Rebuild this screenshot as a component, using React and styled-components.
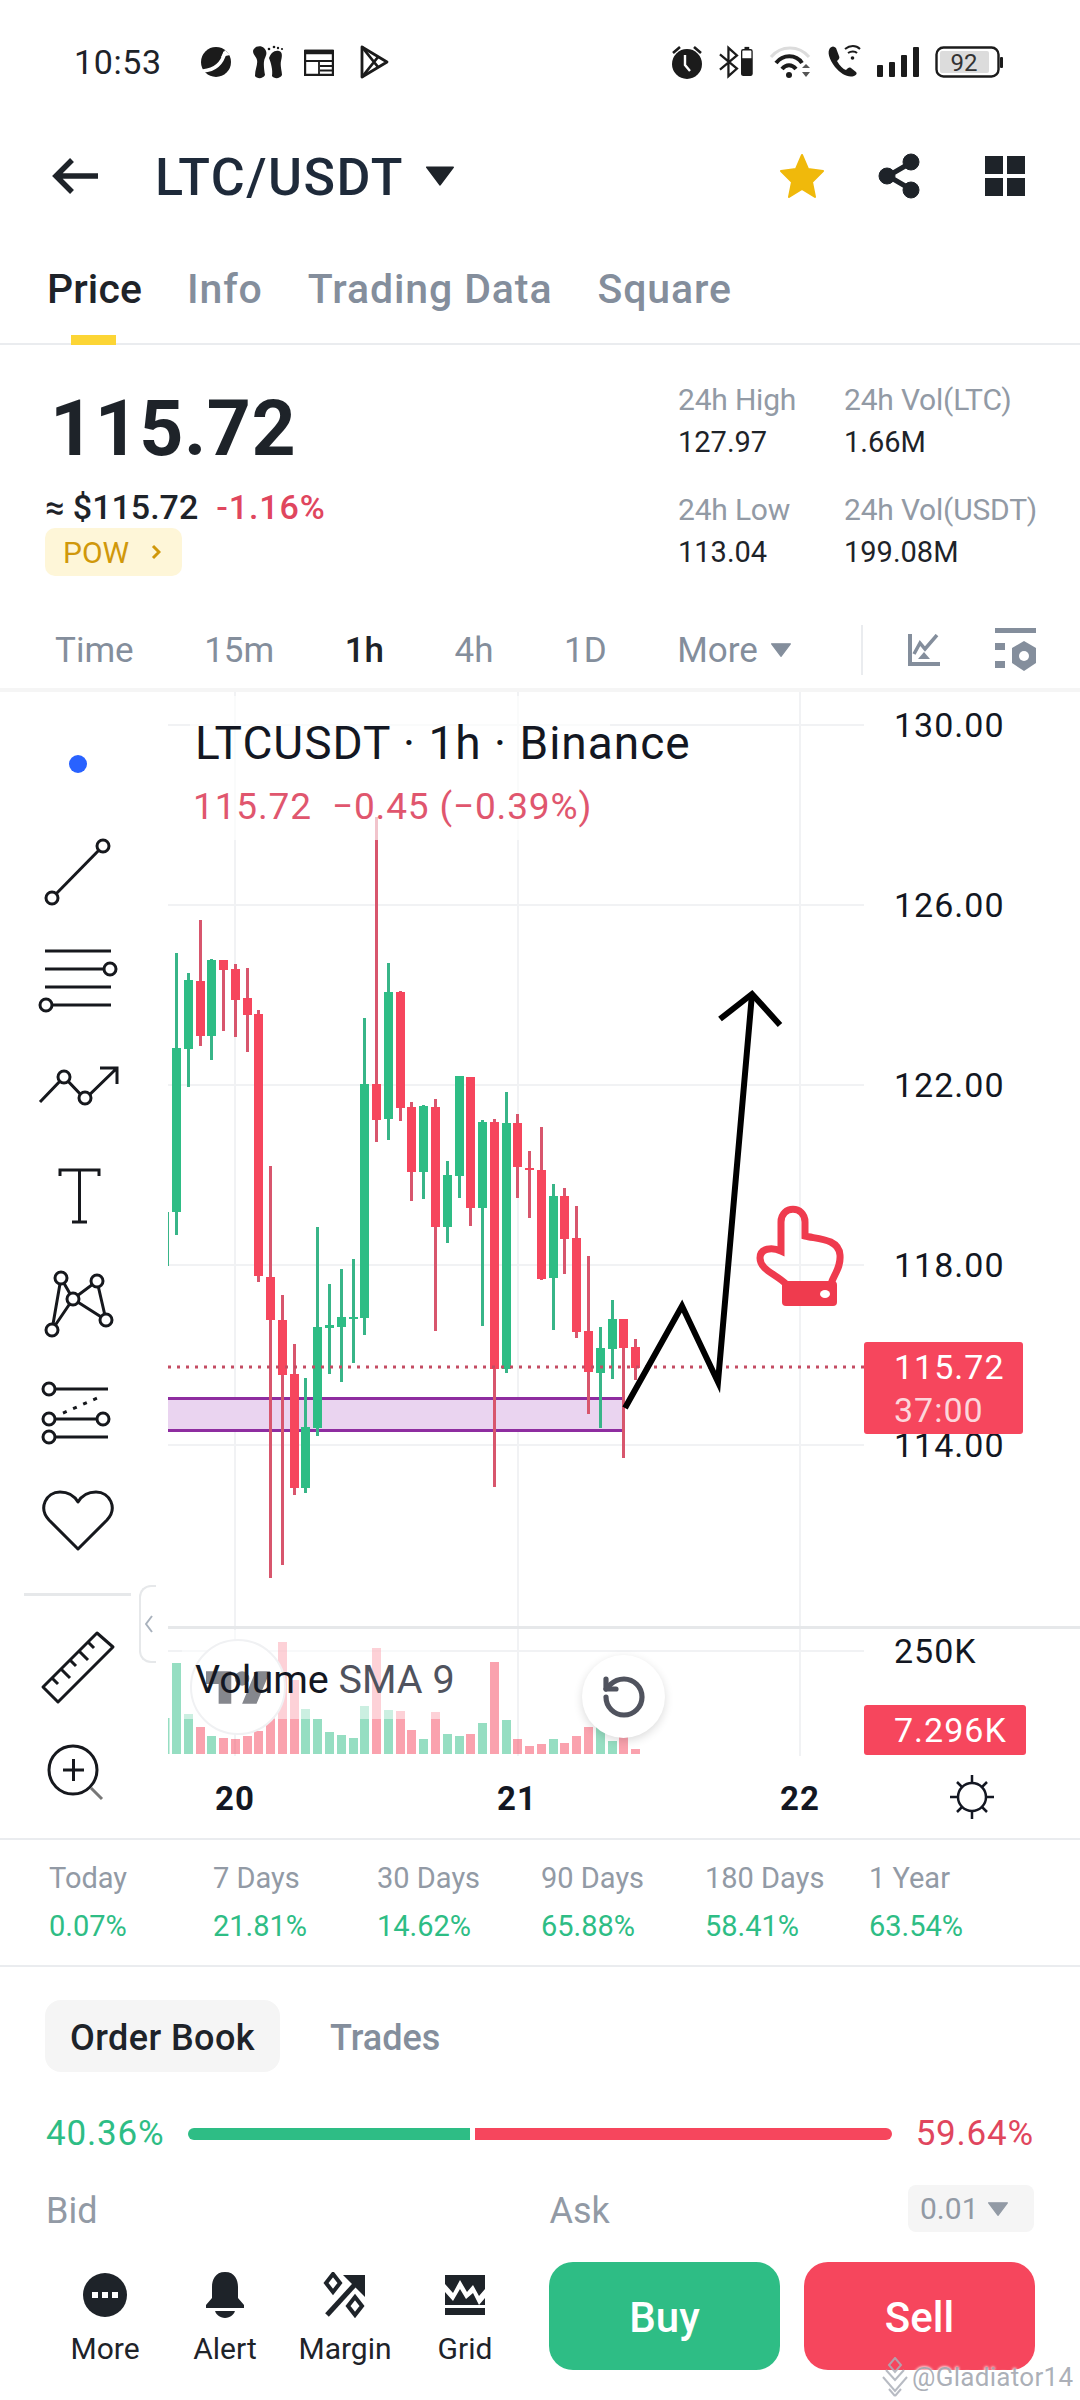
import React from 'react';
import styled, { createGlobalStyle } from 'styled-components';
import { RotateCcw } from 'lucide-react';

const GlobalStyle = createGlobalStyle`
  html, body {
    margin: 0;
    padding: 0;
    background: #fff;
    font-family: Roboto, "Open Sans", sans-serif;
    color: #1e2329;
  }
  * { box-sizing: border-box; }
`;

const DARK = '#1e2329';
const GRAY = '#848e9c';
const GREEN = '#2ebd85';
const RED = '#f6465d';

const Page = styled.div`
  position: relative;
  width: 1080px;
  height: 2400px;
  overflow: hidden;
  background: #fff;
`;

const StatusBar = styled.div`
  height: 124px;
  display: flex;
  align-items: center;
  justify-content: space-between;
  padding: 0 77px 0 74px;
`;

const StatusGroup = styled.div`
  display: flex;
  align-items: center;
  gap: ${p => p.$gap || 0}px;
`;

const Clock = styled.span`
  font-size: 34px;
  letter-spacing: 0.6px;
  margin-right: 18px;
`;

const Header = styled.div`
  height: 104px;
  display: flex;
  align-items: center;
  padding: 0 55px 0 52px;
`;

const PairName = styled.div`
  font-size: 52px;
  font-weight: 500;
  margin: 2px 0 0 57px;
  letter-spacing: 1.5px;
  color: #1e2a3a;
`;

const PairCaret = styled.span`
  margin-left: 22px;
  display: flex;
`;

const HeaderActions = styled.div`
  margin-left: auto;
  display: flex;
  align-items: center;
  gap: 53px;
`;

const Tabs = styled.div`
  height: 117px;
  display: flex;
  align-items: center;
  gap: 45px;
  padding: 6px 0 0 47px;
  border-bottom: 2px solid #eaecef;
`;

const Tab = styled.div`
  position: relative;
  font-size: 41px;
  font-weight: 500;
  letter-spacing: ${p => (p.$active ? 0.1 : 0.9)}px;
  color: ${p => (p.$active ? DARK : GRAY)};
  &::after {
    content: '';
    display: ${p => (p.$active ? 'block' : 'none')};
    position: absolute;
    left: 24px;
    bottom: -32px;
    width: 45px;
    height: 10px;
    background: #fcd535;
  }
`;

const Ticker = styled.div`
  height: 267px;
  display: flex;
  justify-content: space-between;
`;

const TickerLeft = styled.div`
  padding: 44px 0 0 45px;
`;

const BigPrice = styled.div`
  font-size: 77px;
  font-weight: 700;
  line-height: 80px;
  letter-spacing: 0.5px;
  margin-left: 5px;
`;

const PriceSub = styled.div`
  margin-top: 17px;
  height: 42px;
  display: flex;
  align-items: center;
  gap: 18px;
  font-size: 34px;
  font-weight: 500;
`;

const Change = styled.span`
  color: #e0465e;
  letter-spacing: 0.9px;
`;

const Pill = styled.div`
  width: 137px;
  height: 48px;
  display: flex;
  align-items: center;
  gap: 22px;
  padding-left: 18px;
  border-radius: 10px;
  background: #fef6d8;
  color: #d0980b;
  font-size: 30px;
`;

const StatGrid = styled.div`
  width: 402px;
  padding-top: 35px;
  display: grid;
  grid-template-columns: 166px 1fr;
  grid-auto-rows: 83px;
  row-gap: 27px;
`;

const StatCell = styled.div`
  display: flex;
  flex-direction: column;
  gap: 2px;
`;

const StatLabel = styled.div`
  font-size: 30px;
  line-height: 40px;
  letter-spacing: -0.2px;
  color: #929aa5;
`;

const StatValue = styled.div`
  font-size: 29px;
  line-height: 40px;
  color: ${DARK};
`;

const Intervals = styled.div`
  height: 80px;
  padding: 0 44px 0 55px;
  display: flex;
  align-items: center;
  border-bottom: 4px solid #f5f5f5;
`;

const IntervalList = styled.div`
  display: flex;
  align-items: center;
  gap: 70.5px;
`;

const Interval = styled.div`
  display: flex;
  align-items: center;
  gap: 13px;
  font-size: 35px;
  font-weight: ${p => (p.$active ? 500 : 400)};
  color: ${p => (p.$active ? DARK : GRAY)};
`;

const IntervalTools = styled.div`
  margin-left: auto;
  height: 50px;
  display: flex;
  align-items: center;
  gap: 55px;
  padding-left: 45px;
  border-left: 2px solid #eaecef;
`;

const ChartRow = styled.div`
  position: relative;
  display: flex;
  height: 1146px;
`;

const Toolbar = styled.div`
  width: 168px;
  padding-top: 17px;
  display: flex;
  flex-direction: column;
`;

const ToolIcon = styled.svg`
  display: block;
  flex: none;
  width: 168px;
  height: ${p => p.$h || 108}px;
  fill: none;
  stroke: #16181d;
  stroke-width: 3;
`;

const ToolDivider = styled.div`
  width: 107px;
  height: 3px;
  margin: 20px 0 30px 24px;
  background: #e6e8ea;
`;

const Collapse = styled.div`
  position: absolute;
  left: 139px;
  top: 893px;
  width: 17px;
  height: 78px;
  border: 2px solid #e6e8ea;
  border-right: none;
  border-radius: 12px 0 0 12px;
  display: flex;
  align-items: center;
  justify-content: center;
`;

const ChartSvg = styled.svg`
  display: block;
  width: 912px;
  height: 1146px;
`;

const AxisText = styled.text`
  font-family: Roboto, sans-serif;
  font-size: ${p => p.$size || 34}px;
  font-weight: ${p => p.$weight || 400};
  fill: ${p => p.$color || '#131722'};
  letter-spacing: 1px;
`;

const LegendTitle = styled.div`
  position: absolute;
  left: 195px;
  top: 24px;
  font-size: 46px;
  line-height: 54px;
  letter-spacing: 1px;
  color: #131722;
`;

const LegendValues = styled.div`
  position: absolute;
  left: 193px;
  top: 93px;
  font-size: 37px;
  line-height: 44px;
  letter-spacing: 0.85px;
  color: #e0566e;
  white-space: pre;
`;

const VolumeLegend = styled.div`
  position: absolute;
  left: 195px;
  top: 965px;
  font-size: 39.5px;
  line-height: 46px;
  color: #131722;
`;

const Muted = styled.span`
  color: #50535e;
`;

const LogoBadge = styled.div`
  position: absolute;
  left: 190px;
  top: 947px;
  width: 96px;
  height: 96px;
  border-radius: 50%;
  background: #fff;
  border: 2px solid #f0f1f3;
  display: flex;
  align-items: center;
  justify-content: center;
`;

const ResetButton = styled.div`
  position: absolute;
  left: 582px;
  top: 963px;
  width: 83px;
  height: 83px;
  border-radius: 50%;
  background: #fff;
  box-shadow: 0 3px 10px rgba(0, 0, 0, 0.14);
  display: flex;
  align-items: center;
  justify-content: center;
  color: #50535e;
`;

const Performance = styled.div`
  height: 129px;
  padding: 18px 0 0 49px;
  display: grid;
  grid-template-columns: repeat(6, 164px);
  border-top: 2px solid #eaecef;
  border-bottom: 2px solid #eaecef;
`;

const PerfCell = styled.div`
  display: flex;
  flex-direction: column;
  gap: 8px;
`;

const PerfLabel = styled.div`
  font-size: 29px;
  line-height: 40px;
  color: #929aa5;
`;

const PerfValue = styled.div`
  font-size: 29px;
  line-height: 40px;
  color: ${GREEN};
`;

const BookTabs = styled.div`
  margin-top: 33px;
  padding-left: 45px;
  display: flex;
  align-items: center;
  gap: 50px;
`;

const BookChip = styled.div`
  width: 235px;
  height: 72px;
  padding-top: 3px;
  border-radius: 16px;
  background: #f5f5f5;
  display: flex;
  align-items: center;
  justify-content: center;
  font-size: 36px;
  font-weight: 500;
  letter-spacing: 0.4px;
`;

const BookTab = styled.div`
  padding-top: 3px;
  font-size: 36px;
  font-weight: 500;
  color: ${GRAY};
`;

const RatioRow = styled.div`
  margin-top: 37px;
  height: 48px;
  padding: 1px 46px 0;
  display: flex;
  align-items: center;
  justify-content: space-between;
  font-size: 35px;
  letter-spacing: 0.8px;
`;

const RatioText = styled.span`
  color: ${p => (p.$sell ? '#e0465e' : GREEN)};
`;

const RatioBar = styled.div`
  width: 704px;
  height: 12px;
  display: flex;
  gap: 5px;
`;

const RatioPart = styled.div`
  height: 100%;
  background: ${p => (p.$sell ? RED : GREEN)};
  border-radius: ${p => (p.$sell ? '0 6px 6px 0' : '6px 0 0 6px')};
`;

const BidRow = styled.div`
  margin-top: 28px;
  height: 47px;
  padding: 0 46px;
  display: flex;
  align-items: center;
  font-size: 36px;
  color: #929aa5;
`;

const BidLabel = styled.span`
  padding-top: 5px;
`;

const AskLabel = styled(BidLabel)`
  margin-left: 452px;
`;

const StepChip = styled.div`
  margin-left: auto;
  width: 126px;
  height: 47px;
  padding-left: 12px;
  display: flex;
  align-items: center;
  gap: 9px;
  border-radius: 8px;
  background: #f5f5f5;
  font-size: 30px;
`;

const BottomBar = styled.div`
  margin-top: 30px;
  padding: 0 45px 0 45px;
  display: flex;
  align-items: flex-start;
`;

const NavItems = styled.div`
  width: 504px;
  display: grid;
  grid-template-columns: repeat(4, 120px);
`;

const NavItem = styled.div`
  display: flex;
  flex-direction: column;
  align-items: center;
  padding-top: 10px;
  font-size: 30px;
  line-height: 40px;
  color: ${DARK};
  gap: 11px;
`;

const TradeButton = styled.div`
  width: 231px;
  height: 108px;
  padding-top: 3px;
  margin-right: ${p => (p.$sell ? 0 : 24)}px;
  border-radius: 24px;
  background: ${p => (p.$sell ? RED : GREEN)};
  display: flex;
  align-items: center;
  justify-content: center;
  color: #fff;
  font-size: 42px;
  font-weight: 500;
`;

const Watermark = styled.div`
  position: absolute;
  left: 882px;
  top: 2357px;
  display: flex;
  align-items: center;
  gap: 4px;
  font-size: 26px;
  letter-spacing: 0.3px;
  color: rgba(150, 155, 165, 0.8);
  text-shadow: 0 0 3px #fff, 0 0 3px #fff;
`;

// x, wick top, wick bottom, body top, body bottom, colour
const CANDLES = [
  [176.5, 953, 1235, 1048, 1212, 'g'], [188.5, 973, 1087, 980, 1049, 'g'], [200.5, 920, 1046, 981, 1036, 'r'],
  [211.5, 959, 1060, 960, 1036, 'g'], [223.5, 960, 1031, 960, 970, 'r'], [235.5, 964, 1037, 969, 1000, 'r'],
  [247.5, 968, 1052, 998, 1015, 'r'], [258.5, 1010, 1282, 1014, 1276, 'r'], [270.5, 1166, 1578, 1277, 1320, 'r'],
  [282.5, 1295, 1565, 1320, 1375, 'r'], [294.5, 1344, 1495, 1374, 1488, 'r'], [305.5, 1378, 1493, 1427, 1488, 'g'],
  [317.5, 1227, 1436, 1327, 1428, 'g'], [329.5, 1284, 1374, 1325, 1328, 'g'], [341.5, 1269, 1382, 1317, 1327, 'g'],
  [353.5, 1259, 1363, 1317, 1318, 'g'], [364.5, 1018, 1335, 1084, 1318, 'g'], [376.5, 817, 1142, 1084, 1120, 'r'],
  [388.5, 963, 1140, 992, 1119, 'g'], [400.5, 991, 1121, 992, 1108, 'r'], [411.5, 1102, 1201, 1107, 1172, 'r'],
  [423.5, 1105, 1199, 1106, 1172, 'g'], [435.5, 1099, 1331, 1107, 1227, 'r'], [447.5, 1161, 1243, 1175, 1227, 'g'],
  [459.5, 1076, 1198, 1076, 1176, 'g'], [470.5, 1077, 1226, 1077, 1208, 'r'], [482.5, 1120, 1326, 1122, 1208, 'g'],
  [494.5, 1119, 1487, 1122, 1369, 'r'], [506.5, 1092, 1373, 1123, 1369, 'g'], [517.5, 1114, 1198, 1123, 1167, 'r'],
  [529.5, 1151, 1218, 1168, 1170, 'r'], [541.5, 1127, 1280, 1170, 1279, 'r'], [553.5, 1184, 1330, 1196, 1278, 'g'],
  [564.5, 1188, 1274, 1196, 1239, 'r'], [576.5, 1206, 1338, 1238, 1332, 'r'], [588.5, 1256, 1414, 1331, 1372, 'r'],
  [600.5, 1327, 1428, 1348, 1373, 'g'], [612.5, 1300, 1379, 1319, 1349, 'g'], [623.5, 1319, 1458, 1319, 1348, 'r'],
  [635.5, 1339, 1380, 1347, 1368, 'r'],
];

// top of each volume bar, same order as the candles
const VOLUMES = [
  1663, 1714, 1727, 1736, 1738, 1739, 1736, 1731, 1717, 1642, 1680, 1709, 1719, 1732, 1735, 1738, 1706, 1648, 1710,
  1711, 1730, 1739, 1712, 1734, 1736, 1734, 1723, 1662, 1720, 1739, 1746, 1744, 1739, 1743, 1736, 1727, 1725, 1741,
  1733, 1749,
];

const H_GRID = [725, 905, 1085, 1265, 1445, 1651];
const V_GRID = [235, 518, 800];
const PRICE_LABELS = [[725, '130.00'], [905, '126.00'], [1085, '122.00'], [1265, '118.00'], [1445, '114.00']];

const Candle = ({ x, wt, wb, bt, bb, up }) => (
  <g>
    <rect x={x - 1.5} y={wt} width={3} height={wb - wt} fill={up ? '#38b588' : '#d8566d'} />
    <rect x={x - 4.5} y={bt} width={9} height={Math.max(bb - bt, 2)} fill={up ? GREEN : RED} />
  </g>
);

const Chart = () => (
  <ChartSvg viewBox="168 692 912 1146">
    {V_GRID.map(x => <rect key={x} x={x - 1} y={692} width={2} height={1064} fill="#f1f2f4" />)}
    {H_GRID.map(y => <rect key={y} x={168} y={y - 1} width={696} height={2} fill="#f1f2f4" />)}
    <rect x={168} y={1626} width={912} height={3} fill="#e6e8ea" />

    <rect x={168} y={1399} width={454} height={31} fill="#ead4f0" />
    <rect x={168} y={1397} width={454} height={3} fill="#8e2da0" />
    <rect x={168} y={1429} width={454} height={3} fill="#8e2da0" />

    <rect x={167.5} y={1212} width={1.5} height={54} fill="#38b588" />
    {CANDLES.map(([x, wt, wb, bt, bb, c]) => (
      <Candle key={x} x={x} wt={wt} wb={wb} bt={bt} bb={bb} up={c === 'g'} />
    ))}
    <rect x={190} y={696} width={420} height={144} fill="#fff" fillOpacity="0.65" />

    <rect x={168} y={1718} width={1.5} height={36} fill="rgba(46,189,133,0.5)" />
    {VOLUMES.map((top, i) => (
      <rect
        key={i}
        x={CANDLES[i][0] - 4.5}
        y={top}
        width={9}
        height={1754 - top}
        fill={CANDLES[i][5] === 'g' ? 'rgba(46,189,133,0.5)' : 'rgba(246,70,93,0.5)'}
      />
    ))}
    <rect x={182} y={1630} width={258} height={89} fill="#fff" fillOpacity="0.5" />

    <line x1={168} y1={1367} x2={864} y2={1367} stroke="#c44b62" strokeWidth="3" strokeDasharray="3 6" />

    <polyline points="625,1408 682,1306 718,1382 752,994" fill="none" stroke="#000" strokeWidth="6" />
    <polyline points="720,1019 752,994 780,1025" fill="none" stroke="#000" strokeWidth="6" />

    <path
      d="M786 1284C776 1274 760 1270 760 1258C760 1248 772 1247 781 1251L781 1222C781 1205 805 1205 805 1222L805 1236C816 1239 839 1238 840 1255C841 1268 834 1274 831 1284"
      fill="none"
      stroke="#ef3b4e"
      strokeWidth="7"
    />
    <rect x={782} y={1281} width={55} height={25} rx={4} fill="#ef3b4e" />
    <ellipse cx={825} cy={1294} rx={5} ry={4} fill="#fff" />

    {PRICE_LABELS.map(([y, label]) => (
      <AxisText key={label} x={894} y={y + 12}>{label}</AxisText>
    ))}
    <AxisText x={894} y={1663}>250K</AxisText>

    <rect x={864} y={1342} width={159} height={92} rx={3} fill={RED} />
    <AxisText x={894} y={1379} $color="#fff">115.72</AxisText>
    <AxisText x={894} y={1422} $color="#fcd6db">37:00</AxisText>
    <rect x={864} y={1705} width={162} height={50} rx={3} fill={RED} />
    <AxisText x={894} y={1742} $color="#fff">7.296K</AxisText>

    <AxisText x={235} y={1810} $weight={700} $size={33} textAnchor="middle">20</AxisText>
    <AxisText x={517} y={1810} $weight={700} $size={33} textAnchor="middle">21</AxisText>
    <AxisText x={800} y={1810} $weight={700} $size={33} textAnchor="middle">22</AxisText>

    <g fill="none" stroke="#131722" strokeWidth="2.5">
      <circle cx={972} cy={1797} r={14} />
      <path d="M972 1775V1783M972 1811V1819M950 1797H958M986 1797H994M957 1782L962 1787M982 1807L987 1812M987 1782L982 1787M962 1807L957 1812" />
    </g>
  </ChartSvg>
);

const MoonIcon = () => (
  <svg width="32" height="34" viewBox="0 0 32 34">
    <circle cx="16" cy="17" r="15" fill="#1b1b1b" />
    <path d="M3 26C14 25 22 20 25 7" fill="none" stroke="#fff" strokeWidth="3.4" />
    <path d="M21 12L25 5L30 10" fill="#fff" />
  </svg>
);

const ButterflyIcon = () => (
  <svg width="32" height="34" viewBox="0 0 32 34" fill="#1b1b1b">
    <path d="M1 6C2 1 9 0 12 3C15 6 15 9 13 13C11 17 12 24 13 30C11 34 5 34 3 31C3 24 6 20 5 15C4 11 1 10 1 6Z" />
    <path d="M17 13C19 8 22 5 27 6C31 7 30 12 29 16C28 21 30 26 30 30C28 34 22 34 20 31C21 25 19 18 17 13Z" />
    <circle cx="17" cy="4" r="1.3" />
    <circle cx="22" cy="2" r="1.3" />
    <circle cx="26" cy="3" r="1.2" />
    <circle cx="30" cy="4" r="1.1" />
  </svg>
);

const NewsIcon = () => (
  <svg width="30" height="28" viewBox="0 0 30 28" fill="none" stroke="#1b1b1b">
    <path d="M1 3H29V27H1Z" strokeWidth="2.4" />
    <path d="M1 2H29V6H1Z" fill="#1b1b1b" strokeWidth="0.5" />
    <path d="M1 13H29M15 13V27M16 18H28M16 22.5H28" strokeWidth="1.8" />
  </svg>
);

const PlayIcon = () => (
  <svg width="35" height="34" viewBox="-5 0 35 34" fill="none" stroke="#1b1b1b" strokeWidth="2.8" strokeLinejoin="round">
    <path d="M3 2L28 17L3 32Z" />
    <path d="M3 2L19 22M3 32L19 12" />
  </svg>
);

const AlarmIcon = () => (
  <svg width="32" height="34" viewBox="0 0 32 34">
    <circle cx="16" cy="19" r="15" fill="#1b1b1b" />
    <path d="M2 8L9 2M30 8L23 2" stroke="#1b1b1b" strokeWidth="2.6" />
    <path d="M14 10V20L19 26" stroke="#fff" strokeWidth="2.4" fill="none" />
  </svg>
);

const BluetoothBatteryIcon = () => (
  <svg width="34" height="34" viewBox="0 0 36 34">
    <path d="M1 9L19 24L10 32V2L19 10L1 25" fill="none" stroke="#1b1b1b" strokeWidth="2.4" />
    <rect x="24" y="4" width="11" height="27" rx="1.5" fill="none" stroke="#1b1b1b" strokeWidth="1.4" />
    <rect x="27" y="1" width="5" height="3" fill="#1b1b1b" />
    <rect x="24" y="13" width="11" height="18" fill="#1b1b1b" />
  </svg>
);

const WifiIcon = () => (
  <svg width="42" height="34" viewBox="0 0 42 34" fill="none">
    <path d="M2 12C12 0 30 0 40 12" stroke="#dcdcdc" strokeWidth="3" />
    <path d="M7 18C14 9 27 9 33 18" stroke="#1b1b1b" strokeWidth="4" />
    <path d="M13 24C17 19 23 19 27 24" stroke="#1b1b1b" strokeWidth="4" />
    <circle cx="20" cy="30" r="3" fill="#1b1b1b" />
    <path d="M33 23L37 19L41 23ZM33 27L37 32L41 27Z" fill="#555" />
  </svg>
);

const CallIcon = () => (
  <svg width="34" height="34" viewBox="0 0 34 34">
    <path d="M3 3C0 7 2 14 8 22c6 7 13 11 19 9 3-1 3-3 2-4l-5-4c-2-1-3 0-5 2-3-1-6-4-9-9 2-2 3-3 2-5L9 3C7 1 5 1 3 3z" fill="#1b1b1b" />
    <path d="M18 4C23 0 29 0 33 4M21 8C24 6 28 6 30 8" fill="none" stroke="#1b1b1b" strokeWidth="2" />
    <circle cx="25.5" cy="13" r="1.8" fill="#1b1b1b" />
  </svg>
);

const SignalIcon = () => (
  <svg width="42" height="32" viewBox="0 0 42 32" fill="#1b1b1b">
    <rect x="0" y="19" width="6" height="12" rx="1" />
    <rect x="12" y="16" width="6" height="15" rx="1" />
    <rect x="24" y="9" width="6" height="22" rx="1" />
    <rect x="36" y="1" width="6" height="30" rx="1" />
  </svg>
);

const BatteryIcon = () => (
  <svg width="68" height="32" viewBox="0 0 68 32">
    <rect x="1.5" y="1.5" width="62" height="29" rx="7" fill="none" stroke="#1b1b1b" strokeWidth="2.4" />
    <rect x="5" y="5" width="49" height="22" rx="2" fill="#dcdcdc" />
    <rect x="65" y="11" width="3" height="11" rx="1" fill="#1b1b1b" />
    <text x="29" y="25" textAnchor="middle" fontFamily="Roboto, sans-serif" fontSize="24" fill="#333">92</text>
  </svg>
);

const BackArrow = () => (
  <svg width="46" height="36" viewBox="0 0 46 36" fill="none" stroke={DARK} strokeWidth="5.5">
    <path d="M46 18H4M20 2L4 18L20 34" />
  </svg>
);

const Caret = ({ w = 16, h = 11, color = DARK }) => (
  <svg width={w} height={h} viewBox="0 0 16 11">
    <path d="M0.5 0.5H15.5L8 10.5Z" fill={color} stroke={color} strokeLinejoin="round" />
  </svg>
);

const StarIcon = () => (
  <svg width="46" height="46" viewBox="0 0 46 46">
    <path d="M23 2L29 16L44 18L33 29L36 44L23 36L10 44L13 29L2 18L17 16Z" fill="#f0b90b" stroke="#f0b90b" strokeWidth="2" strokeLinejoin="round" />
  </svg>
);

const ShareIcon = () => (
  <svg width="44" height="46" viewBox="0 0 44 46" fill={DARK} stroke={DARK}>
    <path d="M34 9L10 23L34 37" fill="none" strokeWidth="5" />
    <circle cx="33" cy="9" r="8" />
    <circle cx="9" cy="23" r="8" />
    <circle cx="33" cy="37" r="8" />
  </svg>
);

const GridSvg = styled.svg`
  margin-left: 10px;
  fill: ${DARK};
`;

const GridIcon = () => (
  <GridSvg width="40" height="40" viewBox="0 0 40 40">
    <rect width="18" height="18" />
    <rect x="22" width="18" height="18" />
    <rect y="22" width="18" height="18" />
    <rect x="22" y="22" width="18" height="18" />
  </GridSvg>
);

const ChevronSmall = () => (
  <svg width="10" height="16" viewBox="0 0 10 16" fill="none" stroke="#d0980b" strokeWidth="3">
    <path d="M2 2L8 8L2 14" />
  </svg>
);

const IndicatorIcon = () => (
  <svg width="32" height="32" viewBox="0 0 32 32" fill={GRAY}>
    <path d="M0 0H4V28H32V32H0Z" />
    <path d="M6 20L12 9L17 15L29 1" fill="none" stroke={GRAY} strokeWidth="3.5" />
    <path d="M10 25L16 18L22 25Z" />
  </svg>
);

const LayoutIcon = () => (
  <svg width="41" height="44" viewBox="0 0 41 44" fill={GRAY}>
    <rect width="41" height="5" />
    <rect y="15" width="10" height="7" />
    <rect y="33" width="10" height="7" />
    <path d="M29 13L41 20V35L29 43L17 35V20Z" />
    <circle cx="29" cy="28" r="5" fill="#fff" />
  </svg>
);

const Knob = ({ cx, cy, r = 6, sw = 3 }) => <circle cx={cx} cy={cy} r={r} fill="#fff" strokeWidth={sw} />;

const Tools = () => (
  <Toolbar>
    <ToolIcon viewBox="0 709 168 108">
      <circle cx="78" cy="764" r="9" fill="#2962ff" stroke="none" />
    </ToolIcon>
    <ToolIcon viewBox="0 817 168 108">
      <line x1="52" y1="898" x2="103" y2="846" />
      <Knob cx="52" cy="898" />
      <Knob cx="103" cy="846" />
    </ToolIcon>
    <ToolIcon viewBox="0 925 168 108">
      <path d="M45 951H111M45 969H105M45 987H111M52 1005H111" />
      <Knob cx="110" cy="969" />
      <Knob cx="46" cy="1005" />
    </ToolIcon>
    <ToolIcon viewBox="0 1033 168 108">
      <path d="M40 1102L64 1077L85 1099L116 1069M100 1068H117V1084" />
      <Knob cx="64" cy="1077" />
      <Knob cx="85" cy="1098" />
    </ToolIcon>
    <ToolIcon viewBox="0 1141 168 108">
      <path d="M60 1176V1170H99V1176M79.5 1170V1222M72 1222H87" />
    </ToolIcon>
    <ToolIcon viewBox="0 1249 168 108">
      <path d="M61 1278L52 1330L73 1299L106 1320L97 1281L73 1299L61 1278" />
      <Knob cx="61" cy="1278" />
      <Knob cx="97" cy="1281" />
      <Knob cx="73" cy="1299" />
      <Knob cx="52" cy="1330" />
      <Knob cx="106" cy="1320" />
    </ToolIcon>
    <ToolIcon viewBox="0 1357 168 108">
      <path d="M50 1389H108M50 1419H103M50 1437H108" />
      <path d="M63 1413L102 1396" strokeDasharray="4 7" />
      <Knob cx="49" cy="1389" />
      <Knob cx="49" cy="1419" />
      <Knob cx="103" cy="1419" />
      <Knob cx="49" cy="1437" />
    </ToolIcon>
    <ToolIcon viewBox="0 1465 168 108">
      <path d="M78 1549L49 1520C38 1508 46 1492 60 1492C69 1492 75 1497 78 1502C81 1497 87 1492 96 1492C110 1492 118 1508 107 1520Z" strokeLinejoin="round" />
    </ToolIcon>
    <ToolDivider />
    <ToolIcon viewBox="0 1626 168 108">
      <path d="M43 1687L97 1633L113 1647L58 1702Z" strokeLinejoin="round" />
      <path d="M52 1678L58 1684M61 1669L70 1678M70 1660L76 1666M79 1651L88 1660M88 1642L94 1648" />
    </ToolIcon>
    <ToolIcon viewBox="0 1734 168 80" $h={80}>
      <circle cx="73" cy="1770" r="24" />
      <path d="M63 1770H84M73.5 1759V1781" />
      <path d="M91 1788L102 1799" stroke="#777" />
    </ToolIcon>
  </Toolbar>
);

const MoreIcon = () => (
  <svg width="44" height="46" viewBox="0 0 44 46">
    <circle cx="22" cy="23" r="22" fill={DARK} />
    <rect x="9" y="20" width="6" height="6" fill="#fff" />
    <rect x="19" y="20" width="6" height="6" fill="#fff" />
    <rect x="29" y="20" width="6" height="6" fill="#fff" />
  </svg>
);

const BellIcon = () => (
  <svg width="44" height="46" viewBox="0 0 44 46" fill={DARK}>
    <path d="M22 0C12 0 9 8 9 15V26L3 33V36H41V33L35 26V15C35 8 32 0 22 0Z" />
    <path d="M12 38H32C32 42 27 46 22 46C17 46 12 42 12 38Z" />
    <rect x="3" y="36" width="38" height="3" fill="#fff" />
  </svg>
);

const MarginIcon = () => (
  <svg width="44" height="46" viewBox="0 0 44 46" fill={DARK}>
    <path d="M4 43L36 8" stroke={DARK} strokeWidth="5" />
    <path d="M20 3H42V25Z" />
    <path d="M10 2L17 11L10 20L3 11Z" fill="none" stroke={DARK} strokeWidth="4" />
    <path d="M32 25L39 34L32 43L25 34Z" fill="none" stroke={DARK} strokeWidth="4" />
  </svg>
);

const GridBotIcon = () => (
  <svg width="44" height="46" viewBox="0 0 44 46" fill={DARK}>
    <path d="M2 3H42V17L36 24L30 13L24 20L17 8L10 21L2 12Z" />
    <path d="M2 20L10 29L17 17L23 27L30 21L36 33L42 26V33H2Z" />
    <rect x="2" y="36" width="40" height="7" />
  </svg>
);

const BinanceMark = () => (
  <svg width="26" height="40" viewBox="0 0 26 40" fill="none" stroke="rgba(170,175,185,0.85)" strokeWidth="2">
    <path d="M13 1L19 8L13 15L7 8Z" />
    <path d="M4 13L13 23L22 13M1 20L13 34L25 20M13 39L7 32M13 39L19 32" />
  </svg>
);

const TICKER_STATS = [
  ['24h High', '127.97'], ['24h Vol(LTC)', '1.66M'],
  ['24h Low', '113.04'], ['24h Vol(USDT)', '199.08M'],
];

const PERFORMANCE = [
  ['Today', '0.07%'], ['7 Days', '21.81%'], ['30 Days', '14.62%'],
  ['90 Days', '65.88%'], ['180 Days', '58.41%'], ['1 Year', '63.54%'],
];

const NAV = [
  ['More', <MoreIcon key="more" />], ['Alert', <BellIcon key="alert" />],
  ['Margin', <MarginIcon key="margin" />], ['Grid', <GridBotIcon key="grid" />],
];

export default function App() {
  return (
    <Page>
      <GlobalStyle />
      <StatusBar>
        <StatusGroup $gap={20}>
          <Clock>10:53</Clock>
          <MoonIcon />
          <ButterflyIcon />
          <NewsIcon />
          <PlayIcon />
        </StatusGroup>
        <StatusGroup $gap={16}>
          <AlarmIcon />
          <BluetoothBatteryIcon />
          <WifiIcon />
          <CallIcon />
          <SignalIcon />
          <BatteryIcon />
        </StatusGroup>
      </StatusBar>

      <Header>
        <BackArrow />
        <PairName>LTC/USDT</PairName>
        <PairCaret><Caret w={28} h={20} /></PairCaret>
        <HeaderActions>
          <StarIcon />
          <ShareIcon />
          <GridIcon />
        </HeaderActions>
      </Header>

      <Tabs>
        <Tab $active>Price</Tab>
        <Tab>Info</Tab>
        <Tab>Trading Data</Tab>
        <Tab>Square</Tab>
      </Tabs>

      <Ticker>
        <TickerLeft>
          <BigPrice>115.72</BigPrice>
          <PriceSub>
            <span>≈ $115.72</span>
            <Change>-1.16%</Change>
          </PriceSub>
          <Pill>POW <ChevronSmall /></Pill>
        </TickerLeft>
        <StatGrid>
          {TICKER_STATS.map(([label, value]) => (
            <StatCell key={label}>
              <StatLabel>{label}</StatLabel>
              <StatValue>{value}</StatValue>
            </StatCell>
          ))}
        </StatGrid>
      </Ticker>

      <Intervals>
        <IntervalList>
          <Interval>Time</Interval>
          <Interval>15m</Interval>
          <Interval $active>1h</Interval>
          <Interval>4h</Interval>
          <Interval>1D</Interval>
          <Interval>More <Caret w={20} h={14} color={GRAY} /></Interval>
        </IntervalList>
        <IntervalTools>
          <IndicatorIcon />
          <LayoutIcon />
        </IntervalTools>
      </Intervals>

      <ChartRow>
        <Tools />
        <Collapse>
          <svg width="8" height="18" viewBox="0 0 8 18" fill="none" stroke="#a9b2bd" strokeWidth="2"><path d="M7 1L1 9L7 17" /></svg>
        </Collapse>
        <Chart />
        <LogoBadge>
          <svg width="65" height="33" viewBox="0 4 36 18" fill="#85878d">
            <path d="M14 22H7V11H0V4h14v18zM28 22h-8l7.5-18h8L28 22z" />
            <circle cx="20" cy="8" r="4" />
          </svg>
        </LogoBadge>
        <LegendTitle>LTCUSDT · 1h · Binance</LegendTitle>
        <LegendValues>115.72  −0.45 (−0.39%)</LegendValues>
        <VolumeLegend>Volume <Muted>SMA 9</Muted></VolumeLegend>
        <ResetButton><RotateCcw size={48} strokeWidth={2.6} /></ResetButton>
      </ChartRow>

      <Performance>
        {PERFORMANCE.map(([label, value]) => (
          <PerfCell key={label}>
            <PerfLabel>{label}</PerfLabel>
            <PerfValue>{value}</PerfValue>
          </PerfCell>
        ))}
      </Performance>

      <BookTabs>
        <BookChip>Order Book</BookChip>
        <BookTab>Trades</BookTab>
      </BookTabs>

      <RatioRow>
        <RatioText>40.36%</RatioText>
        <RatioBar>
          <RatioPart style={{ width: 282 }} />
          <RatioPart $sell style={{ width: 417 }} />
        </RatioBar>
        <RatioText $sell>59.64%</RatioText>
      </RatioRow>

      <BidRow>
        <BidLabel>Bid</BidLabel>
        <AskLabel>Ask</AskLabel>
        <StepChip>0.01 <Caret w={20} h={14} color="#929aa5" /></StepChip>
      </BidRow>

      <BottomBar>
        <NavItems>
          {NAV.map(([label, icon]) => (
            <NavItem key={label}>
              {icon}
              {label}
            </NavItem>
          ))}
        </NavItems>
        <TradeButton>Buy</TradeButton>
        <TradeButton $sell>Sell</TradeButton>
      </BottomBar>

      <Watermark>
        <BinanceMark />
        @Gladiator14
      </Watermark>
    </Page>
  );
}
